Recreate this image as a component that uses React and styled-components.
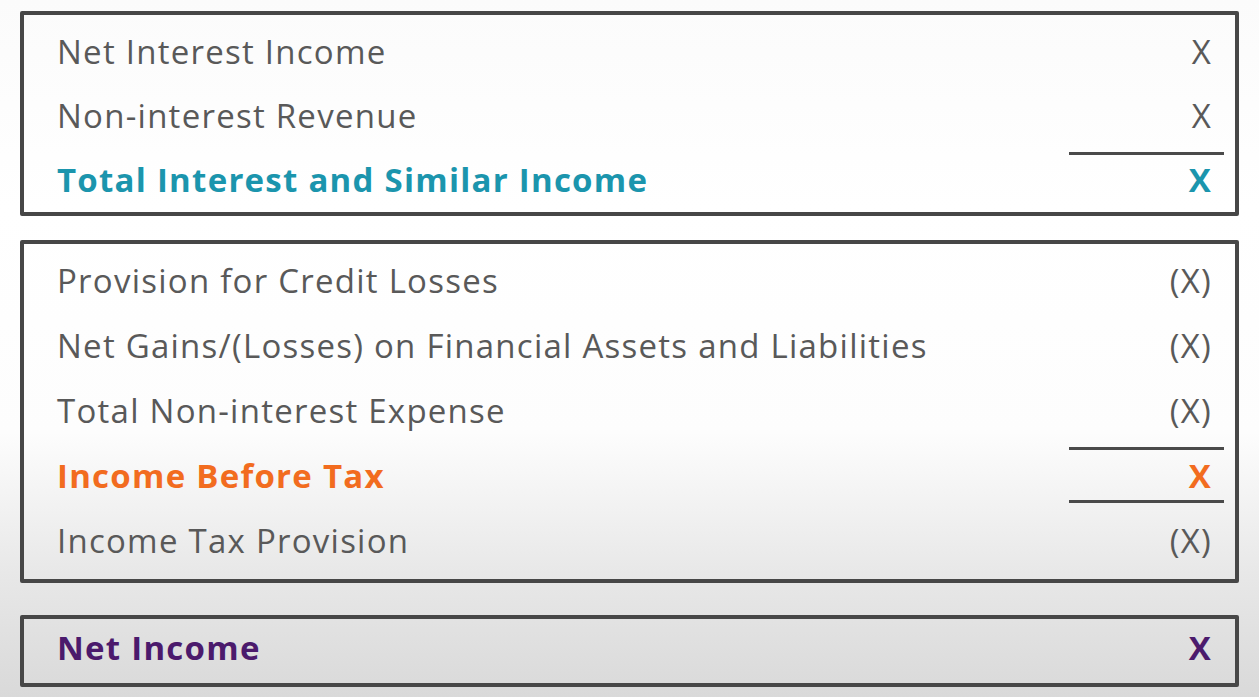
import React from "react";
import styled, { createGlobalStyle } from "styled-components";

const Global = createGlobalStyle`
  html, body { margin: 0; padding: 0; }
  body {
    font-family: "Open Sans", "Liberation Sans", sans-serif;
    background: linear-gradient(to bottom, #fbfbfb 0%, #ffffff 30%, #fdfdfd 62%, #e8e8e8 82%, #d9d9d9 100%);
    min-height: 100vh;
  }
`;

const Page = styled.main`
  box-sizing: border-box;
  height: 697px;
  padding: 11px 20px 0 20px;
  display: flex;
  flex-direction: column;
`;

const Box = styled.section`
  border: 4px solid #474747;
  border-radius: 2px;
  padding: ${(p) => p.$pad};
  margin-bottom: ${(p) => p.$gap || "0px"};
  display: flex;
  flex-direction: column;
`;

const COLORS = {
  plain: "#595959",
  teal: "#1b95ad",
  orange: "#f26c1f",
  purple: "#4b1a6c",
};

const Row = styled.div`
  display: flex;
  align-items: center;
  justify-content: space-between;
  height: ${(p) => p.$h || 65}px;
  padding: 0 11px 0 33px;
  font-size: 33px;
  line-height: ${(p) => p.$h || 65}px;
  color: ${(p) => COLORS[p.$tone]};
  font-weight: ${(p) => (p.$tone === "plain" ? 400 : 700)};
  letter-spacing: 1.25px;
`;

const Label = styled.span`
  white-space: nowrap;
`;

const Value = styled.span`
  box-sizing: border-box;
  width: 155px;
  height: 100%;
  text-align: right;
  padding-right: 12px;
  white-space: nowrap;
  background: ${(p) => {
    const layers = [];
    if (p.$ruleTop) layers.push("linear-gradient(#4a4a4a, #4a4a4a) no-repeat left 0 top 4px / 100% 3px");
    if (p.$ruleBottom) layers.push("linear-gradient(#4a4a4a, #4a4a4a) no-repeat left 0 bottom 5px / 100% 3px");
    return layers.length ? layers.join(", ") : "none";
  }};
`;

function Line({ label, value, tone = "plain", ruleTop, ruleBottom, h }) {
  return (
    <Row $tone={tone} $h={h}>
      <Label>{label}</Label>
      <Value $ruleTop={ruleTop} $ruleBottom={ruleBottom}>{value}</Value>
    </Row>
  );
}

export default function App() {
  return (
    <>
      <Global />
      <Page>
        <Box $pad="5px 0 0 0" $gap="24px">
          <Line label="Net Interest Income" value="X" h={64} />
          <Line label="Non-interest Revenue" value="X" h={64} />
          <Line label="Total Interest and Similar Income" value="X" tone="teal" ruleTop h={64} />
        </Box>
        <Box $pad="4px 0 6px 0" $gap="32px">
          <Line label="Provision for Credit Losses" value="(X)" />
          <Line label="Net Gains/(Losses) on Financial Assets and Liabilities" value="(X)" />
          <Line label="Total Non-interest Expense" value="(X)" />
          <Line label="Income Before Tax" value="X" tone="orange" ruleTop ruleBottom />
          <Line label="Income Tax Provision" value="(X)" />
        </Box>
        <Box $pad="0 0 6px 0">
          <Line label="Net Income" value="X" tone="purple" h={58} />
        </Box>
      </Page>
    </>
  );
}
